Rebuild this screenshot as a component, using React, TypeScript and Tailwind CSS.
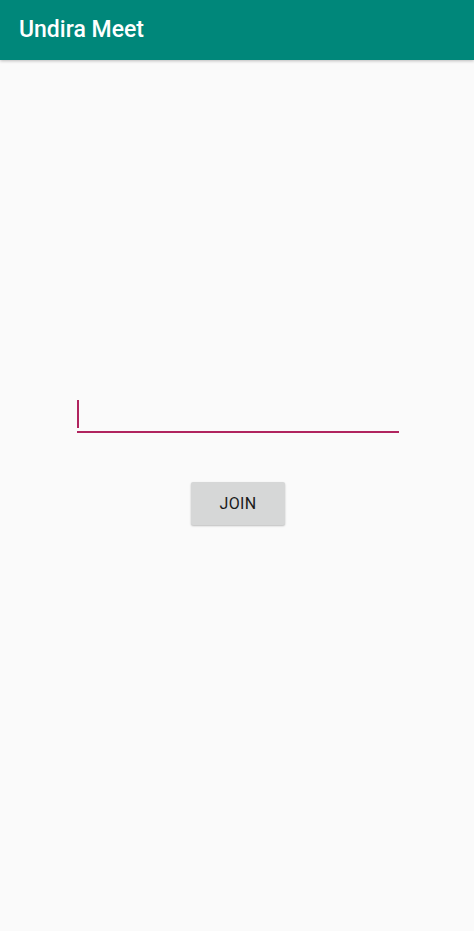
import React from "react";

export default function App() {
  return (
    <div
      className="min-h-[931px] w-full bg-[#fafafa] flex flex-col"
      style={{ fontFamily: "Roboto, 'Liberation Sans', sans-serif" }}
    >
      {/* App bar */}
      <header className="h-[60px] bg-[#00877a] flex items-center px-[19px] shadow-[0_1px_3px_rgba(0,0,0,0.25)]">
        <h1 className="text-white text-[23px] font-medium leading-none pb-[2px]">
          Undira Meet
        </h1>
      </header>

      <main className="flex flex-col items-center pt-[340px]">
        {/* Text field */}
        <div className="w-[322px] ml-[2px] flex flex-col">
          <div className="h-[31px] flex">
            <div className="w-[2px] h-[28px] bg-[#b0245e]" />
          </div>
          <div className="h-[2px] bg-[#b0245e]" />
        </div>

        {/* Join button */}
        <button className="mt-[49px] ml-[2px] w-[94px] h-[43px] rounded-[2px] bg-[#d6d7d7] shadow-[0_1px_2px_rgba(0,0,0,0.25)] text-[16px] font-normal text-[#1a1a1a] tracking-[0.3px]">
          JOIN
        </button>
      </main>
    </div>
  );
}
